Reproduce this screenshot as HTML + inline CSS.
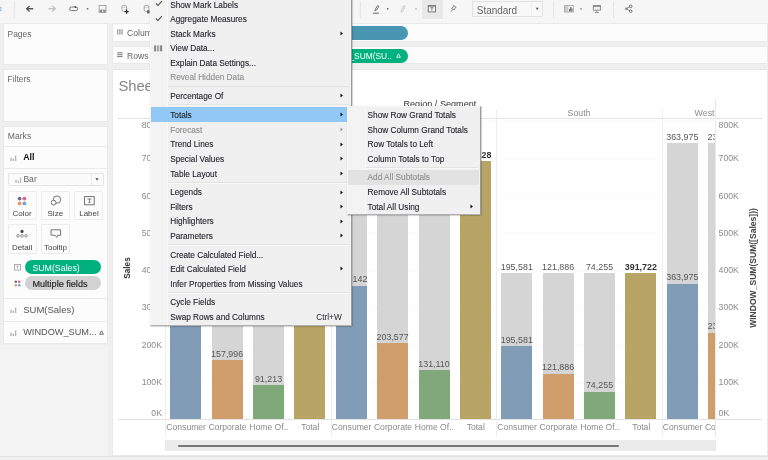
<!DOCTYPE html>
<html><head><meta charset="utf-8"><title>Tableau - Sheet 1</title>
<style>
html,body{margin:0;padding:0;}
body{width:768px;height:460px;overflow:hidden;position:relative;background:#ededed;font-family:"Liberation Sans",sans-serif;}
#wrap{position:absolute;left:-6px;top:-6px;width:780px;height:472px;background:#f2f2f2;filter:blur(0.4px);}
#app{position:absolute;left:6px;top:6px;width:768px;height:460px;overflow:hidden;}
#app div,#app svg{position:absolute;}
.t{white-space:nowrap;}
</style></head><body><div id="wrap"><div id="app">
<div style="left:0px;top:0px;width:768px;height:460px;background:#efefef;"></div>
<div style="left:0px;top:0px;width:768px;height:23.4px;background:#f6f6f6;"></div>
<div style="left:3.4px;top:23.2px;width:104.4px;height:41.4px;background:#fcfcfc;border:1px solid #e9e9e9;box-sizing:border-box;"></div>
<div style="left:3.4px;top:69px;width:104.4px;height:53px;background:#fcfcfc;border:1px solid #e9e9e9;box-sizing:border-box;"></div>
<div style="left:3.4px;top:126px;width:104.4px;height:217.6px;background:#fcfcfc;border:1px solid #e9e9e9;box-sizing:border-box;"></div>
<div style="left:0px;top:345px;width:112px;height:115px;background:#f3f3f3;"></div>
<div style="left:108px;top:24px;width:4px;height:436px;background:#f0f0f0;"></div>
<div style="left:112px;top:23.4px;width:656px;height:18.2px;background:#fcfcfc;border:1px solid #e9e9e9;box-sizing:border-box;"></div>
<div style="left:112px;top:46.2px;width:656px;height:18.2px;background:#fcfcfc;border:1px solid #e9e9e9;box-sizing:border-box;"></div>
<div style="left:112px;top:68.6px;width:656px;height:387px;background:#fff;border:1px solid #e9e9e9;box-sizing:border-box;"></div>
<div style="left:0px;top:455.6px;width:768px;height:5px;background:#f0f0f0;border-top:1px solid #e0e0e0;box-sizing:border-box;"></div>
<div style="left:422px;top:0px;width:20.6px;height:18.8px;background:#e8e8e8;"></div>
<div style="left:472px;top:1.4px;width:71.4px;height:16px;background:#f8f8f8;border:1px solid #e2e2e2;box-sizing:border-box;border-radius:1px;"></div>
<div style="left:531px;top:2.4px;width:1px;height:14px;background:#efefef;"></div>
<div class="t" style="left:476.8px;top:3.80px;height:14px;line-height:14px;font-size:10px;color:#666;font-weight:400;letter-spacing:-0.05px;">Standard</div>
<svg style="left:0;top:0" width="768" height="23" viewBox="0 0 768 23"><path d="M14.3 1.8V17.8" stroke="#e2e2e2" stroke-width="1"/><path d="M360.3 1.8V17.8" stroke="#e2e2e2" stroke-width="1"/><path d="M553.6 1.8V17.8" stroke="#e2e2e2" stroke-width="1"/><path d="M613.6 1.8V17.8" stroke="#e2e2e2" stroke-width="1"/><path d="M0 7.4h1.6M0 9h1.8M0 10.6h1.6" stroke="#8fb0d4" stroke-width="0.9"/><path d="M33.2 8.75H26.8M29.6 5.9L26.6 8.75l3 2.85" fill="none" stroke="#555" stroke-width="1.3"/><path d="M48.6 8.75H55M52.3 5.9l3 2.85-3 2.85" fill="none" stroke="#c2c2c2" stroke-width="1.3"/><rect x="69.7" y="7" width="8" height="3.6" rx="1.8" fill="none" stroke="#777" stroke-width="1"/><circle cx="75.4" cy="7.1" r="0.9" fill="#445"/><rect x="86.7" y="8" width="1.6" height="1.6" fill="#777"/><rect x="386.9" y="8" width="1.6" height="1.6" fill="#777"/><rect x="415.2" y="8" width="1.6" height="1.6" fill="#c4c4c4"/><rect x="580.2" y="8" width="1.6" height="1.6" fill="#999"/><rect x="99.1" y="5.5" width="6.9" height="6.9" fill="#f3f3f3" stroke="#a2a2a2" stroke-width="0.9"/><rect x="99.5" y="9.7" width="6.1" height="2.6" fill="#8c8c8c"/><rect x="102" y="10.6" width="1.4" height="1.4" fill="#e8e8e8"/><rect x="121.9" y="5.4" width="4.6" height="6" rx="1.5" fill="none" stroke="#a0a0a0" stroke-width="0.9"/><path d="M121.9 7.2h4.6" stroke="#b5b5b5" stroke-width="0.6"/><rect x="124.4" y="9.5" width="4.4" height="4.4" fill="#f6f6f6"/><path d="M126.6 9.6v4.2M124.5 11.7h4.2" stroke="#2a2a2a" stroke-width="1.3"/><rect x="144.2" y="5.4" width="4.6" height="6" rx="1.5" fill="none" stroke="#a0a0a0" stroke-width="0.9"/><path d="M144.2 7.2h4.6" stroke="#b5b5b5" stroke-width="0.6"/><rect x="147" y="10.3" width="2.6" height="3.1" fill="#666"/><path d="M375 11l0.4-1.9 2.3-3.6 1.2 0.8-2.3 3.6z" fill="none" stroke="#666" stroke-width="0.9"/><path d="M372.8 13.2h6" stroke="#666" stroke-width="1"/><path d="M401 10.8l2.2-4.6a1 1 0 0 1 1.8 0.9l-2.2 4.6a1 1 0 0 1-1.8-0.9z" fill="#e6e6e6" stroke="#cdcdcd" stroke-width="0.9"/><rect x="428.3" y="5.5" width="7.2" height="6.4" fill="#f4f4f4" stroke="#777" stroke-width="1"/><path d="M428.3 6h7.2" stroke="#777" stroke-width="1.2"/><path d="M430.4 7.7h3M431.9 7.7v2.9" stroke="#777" stroke-width="0.9"/><path d="M453.6 5.4l2.6 1.9-1 0.5-0.9 2.2-2.9-1.6 1.8-1.4z" fill="#e9e9e9" stroke="#777" stroke-width="0.8"/><path d="M452.6 9.4l-1.6 2.3" stroke="#777" stroke-width="0.9"/><path d="M535.7 7.8h3.1l-1.55 2.1z" fill="#555"/><rect x="564.4" y="5.6" width="9.2" height="6.4" fill="#d6d6d6" stroke="#a6a6a6" stroke-width="0.8"/><rect x="568.4" y="6.2" width="4.8" height="5.2" fill="#f2f2f2"/><path d="M569.6 11.4V9.2M570.8 11.4V7M572 11.4V8.4" stroke="#555" stroke-width="1"/><path d="M565.6 6.6v4.6M567 6.6v4.6" stroke="#bdbdbd" stroke-width="0.8"/><rect x="593.3" y="5.8" width="7.1" height="4.4" fill="#f0f0f0" stroke="#888" stroke-width="0.9"/><path d="M593 6h7.8" stroke="#777" stroke-width="1.3"/><path d="M596.85 10.4v1.8M595 12.5h3.8" stroke="#888" stroke-width="0.9"/><path d="M626.4 8.75l4.2-2.5M626.4 8.75l4.2 2.5" stroke="#777" stroke-width="0.9"/><circle cx="626.3" cy="8.75" r="1.3" fill="#8a8a8a"/><circle cx="630.7" cy="6.3" r="1.3" fill="#f6f6f6" stroke="#666" stroke-width="0.9"/><circle cx="630.7" cy="11.2" r="1.3" fill="#f6f6f6" stroke="#666" stroke-width="0.9"/></svg>
<div class="t" style="left:7.6px;top:27.80px;height:12px;line-height:12px;font-size:8.4px;color:#666;font-weight:400;">Pages</div>
<div class="t" style="left:7.6px;top:73.00px;height:12px;line-height:12px;font-size:8.4px;color:#666;font-weight:400;">Filters</div>
<div class="t" style="left:7.8px;top:130.20px;height:12px;line-height:12px;font-size:8.6px;color:#666;font-weight:400;">Marks</div>
<div style="left:4px;top:146px;width:103px;height:1px;background:#ebebeb;"></div>
<svg style="left:10px;top:154.5px" width="7" height="6" viewBox="0 0 7 6"><rect x="0.3" y="2.6" width="1.4" height="3.4" fill="#b5b5b5"/><rect x="2.6" y="3.6" width="1.4" height="2.4" fill="#b5b5b5"/><rect x="4.9" y="0.6" width="1.4" height="5.4" fill="#b5b5b5"/></svg>
<div class="t" style="left:23.2px;top:150.90px;height:13px;line-height:13px;font-size:8.9px;color:#111;font-weight:700;">All</div>
<div style="left:4px;top:168px;width:103px;height:1px;background:#ebebeb;"></div>
<div style="left:8px;top:172.5px;width:95.5px;height:13.5px;background:#fbfbfb;border:1px solid #e4e4e4;box-sizing:border-box;border-radius:1.5px;"></div>
<div style="left:90.5px;top:173.5px;width:1px;height:11.5px;background:#ececec;"></div>
<svg style="left:14.6px;top:176.6px" width="7" height="6" viewBox="0 0 7 6"><rect x="0.3" y="2.6" width="1.4" height="3.4" fill="#c0c0c0"/><rect x="2.6" y="3.6" width="1.4" height="2.4" fill="#c0c0c0"/><rect x="4.9" y="0.6" width="1.4" height="5.4" fill="#c0c0c0"/></svg>
<div class="t" style="left:23.4px;top:173.30px;height:12px;line-height:12px;font-size:8.6px;color:#666;font-weight:400;">Bar</div>
<svg style="left:95.2px;top:178.4px" width="4" height="3" viewBox="0 0 4 3"><path d="M0.4 0.3h3.2L2 2.4z" fill="#444"/></svg>
<div style="left:7.5px;top:190.5px;width:29.2px;height:29.4px;background:#fcfcfc;border:1px solid #ececec;box-sizing:border-box;border-radius:1px;"></div>
<div style="left:41px;top:190.5px;width:29.2px;height:29.4px;background:#fcfcfc;border:1px solid #ececec;box-sizing:border-box;border-radius:1px;"></div>
<div style="left:74.3px;top:190.5px;width:29.2px;height:29.4px;background:#fcfcfc;border:1px solid #ececec;box-sizing:border-box;border-radius:1px;"></div>
<div style="left:7.5px;top:224px;width:29.2px;height:29.6px;background:#fcfcfc;border:1px solid #ececec;box-sizing:border-box;border-radius:1px;"></div>
<div style="left:41px;top:224px;width:29.2px;height:29.6px;background:#fcfcfc;border:1px solid #ececec;box-sizing:border-box;border-radius:1px;"></div>
<svg style="left:17px;top:195.5px" width="10" height="10" viewBox="0 0 10 10"><circle cx="2.6" cy="2.6" r="1.9" fill="#6b6b8c"/><circle cx="7.4" cy="2.6" r="1.9" fill="#e8607a"/><circle cx="2.6" cy="7.4" r="1.9" fill="#e8956a"/><circle cx="7.4" cy="7.4" r="1.9" fill="#6fa3cf"/></svg>
<div class="t" style="left:-77.9px;width:200px;text-align:center;top:208.30px;height:12px;line-height:12px;font-size:8.0px;color:#444;font-weight:400;">Color</div>
<svg style="left:49.5px;top:195px" width="12" height="11" viewBox="0 0 12 11"><circle cx="7" cy="4.6" r="3.7" fill="none" stroke="#666" stroke-width="0.9"/><circle cx="3.6" cy="7.6" r="2.4" fill="#fcfcfc" stroke="#666" stroke-width="0.9"/></svg>
<div class="t" style="left:-44.7px;width:200px;text-align:center;top:208.30px;height:12px;line-height:12px;font-size:8.0px;color:#444;font-weight:400;">Size</div>
<svg style="left:83.5px;top:195.5px" width="11" height="10" viewBox="0 0 11 10"><rect x="0.6" y="0.6" width="9.6" height="8.2" fill="none" stroke="#666" stroke-width="0.9"/><path d="M3.4 3h4M5.4 3v3.6M4.4 6.6h2" stroke="#666" stroke-width="0.8"/></svg>
<div class="t" style="left:-11px;width:200px;text-align:center;top:208.30px;height:12px;line-height:12px;font-size:8.0px;color:#444;font-weight:400;">Label</div>
<svg style="left:16px;top:229px" width="12" height="10" viewBox="0 0 12 10"><circle cx="6" cy="2.4" r="1.6" fill="#444"/><circle cx="2" cy="6.8" r="1.3" fill="none" stroke="#777" stroke-width="0.8"/><circle cx="6" cy="6.8" r="1.3" fill="none" stroke="#777" stroke-width="0.8"/><circle cx="10" cy="6.8" r="1.3" fill="none" stroke="#777" stroke-width="0.8"/></svg>
<div class="t" style="left:-77.9px;width:200px;text-align:center;top:242.00px;height:12px;line-height:12px;font-size:8.0px;color:#444;font-weight:400;">Detail</div>
<svg style="left:49.5px;top:229px" width="12" height="10" viewBox="0 0 12 10"><path d="M1 0.8h9.6v5.4H7.6L6.8 8.4 5 6.2H1z" fill="none" stroke="#666" stroke-width="0.9"/></svg>
<div class="t" style="left:-44.5px;width:200px;text-align:center;top:242.00px;height:12px;line-height:12px;font-size:8.0px;color:#444;font-weight:400;">Tooltip</div>
<svg style="left:14px;top:263.5px" width="7" height="7" viewBox="0 0 7 7"><rect x="0.5" y="0.5" width="6" height="5.6" fill="none" stroke="#999" stroke-width="0.8"/><path d="M2.2 2.2h2.6M3.5 2.2v2.6" stroke="#999" stroke-width="0.7"/></svg>
<div style="left:25px;top:260.2px;width:76px;height:14.2px;background:#00b180;border-radius:7.1px;"></div>
<div class="t" style="left:32.4px;top:261.70px;height:13px;line-height:13px;font-size:8.8px;color:#fff;font-weight:400;">SUM(Sales)</div>
<svg style="left:14px;top:279.5px" width="7" height="7" viewBox="0 0 7 7"><circle cx="1.8" cy="1.8" r="1.3" fill="#6b6b8c"/><circle cx="5.2" cy="1.8" r="1.3" fill="#e8607a"/><circle cx="1.8" cy="5.2" r="1.3" fill="#e8956a"/><circle cx="5.2" cy="5.2" r="1.3" fill="#6fa3cf"/></svg>
<div style="left:25px;top:276.3px;width:76px;height:13.9px;background:#d2d2d2;border-radius:7px;"></div>
<div class="t" style="left:32.4px;top:277.70px;height:13px;line-height:13px;font-size:9.1px;color:#2a2a2a;font-weight:400;-webkit-text-stroke:0.2px #2a2a2a;">Multiple fields</div>
<div style="left:4px;top:298px;width:103px;height:1px;background:#ebebeb;"></div>
<svg style="left:10px;top:307px" width="7" height="6" viewBox="0 0 7 6"><rect x="0.3" y="2.6" width="1.4" height="3.4" fill="#b5b5b5"/><rect x="2.6" y="3.6" width="1.4" height="2.4" fill="#b5b5b5"/><rect x="4.9" y="0.6" width="1.4" height="5.4" fill="#b5b5b5"/></svg>
<div class="t" style="left:23.2px;top:302.90px;height:13px;line-height:13px;font-size:9.5px;color:#555;font-weight:400;">SUM(Sales)</div>
<div style="left:4px;top:321px;width:103px;height:1px;background:#ebebeb;"></div>
<svg style="left:10px;top:329.8px" width="7" height="6" viewBox="0 0 7 6"><rect x="0.3" y="2.6" width="1.4" height="3.4" fill="#b5b5b5"/><rect x="2.6" y="3.6" width="1.4" height="2.4" fill="#b5b5b5"/><rect x="4.9" y="0.6" width="1.4" height="5.4" fill="#b5b5b5"/></svg>
<div class="t" style="left:23.2px;top:326.40px;height:13px;line-height:13px;font-size:9.2px;color:#555;font-weight:400;">WINDOW_SUM...</div>
<svg style="left:99.2px;top:329.6px" width="5" height="5" viewBox="0 0 5 5"><path d="M2.5 0.8L4.4 4.3H0.6z" fill="none" stroke="#555" stroke-width="0.8"/></svg>
<svg style="left:116.6px;top:29.4px" width="6" height="6" viewBox="0 0 6 6"><path d="M0.8 0.2v5.4M2.9 0.2v5.4M5 0.2v5.4" stroke="#666" stroke-width="0.8"/></svg>
<div class="t" style="left:127px;top:27.00px;height:12px;line-height:12px;font-size:8.6px;color:#666;font-weight:400;">Columns</div>
<svg style="left:116.6px;top:52.2px" width="6" height="6" viewBox="0 0 6 6"><path d="M0.2 0.8h5.4M0.2 2.7h5.4M0.2 4.6h5.4" stroke="#777" stroke-width="1"/></svg>
<div class="t" style="left:127px;top:49.60px;height:12px;line-height:12px;font-size:8.6px;color:#666;font-weight:400;">Rows</div>
<div style="left:300px;top:25.8px;width:108px;height:14.2px;background:#4996b2;border-radius:7.1px;"></div>
<div style="left:300px;top:48.5px;width:108px;height:14.2px;background:#00b180;border-radius:7.1px;"></div>
<div class="t" style="left:349.4px;top:49.60px;height:12px;line-height:12px;font-size:8.4px;color:#fff;font-weight:400;transform:scaleY(1.12);transform-origin:50% 60%;">_SUM(SU..</div>
<svg style="left:396px;top:53px" width="5" height="5" viewBox="0 0 5 5"><path d="M2.5 0.8L4.4 4.3H0.6z" fill="none" stroke="#fff" stroke-width="0.8"/></svg>
<div class="t" style="left:118.6px;top:76.00px;height:20px;line-height:20px;font-size:14.8px;color:#858585;font-weight:400;letter-spacing:-0.1px;">Sheet 1</div>
<div class="t" style="left:403.5px;top:97.90px;height:13px;line-height:13px;font-size:9.1px;color:#333;font-weight:400;">Region / Segment</div>
<div style="left:165.4px;top:382.0px;width:549.6px;height:1px;border-top:1px dotted #f4f4f4;box-sizing:border-box;"></div>
<div style="left:165.4px;top:344.7px;width:549.6px;height:1px;border-top:1px dotted #f4f4f4;box-sizing:border-box;"></div>
<div style="left:165.4px;top:307.4px;width:549.6px;height:1px;border-top:1px dotted #f4f4f4;box-sizing:border-box;"></div>
<div style="left:165.4px;top:270.1px;width:549.6px;height:1px;border-top:1px dotted #f4f4f4;box-sizing:border-box;"></div>
<div style="left:165.4px;top:232.8px;width:549.6px;height:1px;border-top:1px dotted #f4f4f4;box-sizing:border-box;"></div>
<div style="left:165.4px;top:195.5px;width:549.6px;height:1px;border-top:1px dotted #f4f4f4;box-sizing:border-box;"></div>
<div style="left:165.4px;top:158.2px;width:549.6px;height:1px;border-top:1px dotted #f4f4f4;box-sizing:border-box;"></div>
<div style="left:165.4px;top:120.9px;width:549.6px;height:1px;border-top:1px dotted #f4f4f4;box-sizing:border-box;"></div>
<div style="left:118px;top:118px;width:644px;height:1px;background:#e2e2e2;"></div>
<div style="left:118px;top:419px;width:644px;height:1px;background:#e2e2e2;"></div>
<div style="left:165.4px;top:119px;width:1px;height:318px;border-left:1px solid #eeeeee;box-sizing:border-box;"></div>
<div style="left:330.9px;top:109px;width:1px;height:328px;border-left:1px solid #eeeeee;box-sizing:border-box;"></div>
<div style="left:496.4px;top:109px;width:1px;height:328px;border-left:1px solid #eeeeee;box-sizing:border-box;"></div>
<div style="left:661.9px;top:109px;width:1px;height:328px;border-left:1px solid #eeeeee;box-sizing:border-box;"></div>
<div style="left:715.0px;top:99px;width:1px;height:338px;border-left:1px solid #e9e9e9;box-sizing:border-box;"></div>
<div style="left:0;top:0;width:715.0px;height:460px;overflow:hidden;"><div style="left:170.3px;top:232.34px;width:31px;height:186.96px;background:#d5d5d5;"></div><div style="left:170.3px;top:325.29px;width:31px;height:94.01px;background:#819cb7;"></div><div class="t" style="left:85.8px;width:200px;text-align:center;top:220.24px;height:13px;line-height:13px;font-size:8.9px;color:#555;font-weight:400;">252,031</div><div class="t" style="left:85.8px;width:200px;text-align:center;top:312.59px;height:13px;line-height:13px;font-size:8.9px;color:#555;font-weight:400;">252,031</div><div style="left:211.65px;top:232.34px;width:31px;height:186.96px;background:#d5d5d5;"></div><div style="left:211.65px;top:360.37px;width:31px;height:58.93px;background:#d09e6d;"></div><div class="t" style="left:127.15px;width:200px;text-align:center;top:220.24px;height:13px;line-height:13px;font-size:8.9px;color:#555;font-weight:400;">157,996</div><div class="t" style="left:127.15px;width:200px;text-align:center;top:347.67px;height:13px;line-height:13px;font-size:8.9px;color:#555;font-weight:400;">157,996</div><div style="left:253.0px;top:232.34px;width:31px;height:186.96px;background:#d5d5d5;"></div><div style="left:253.0px;top:385.28px;width:31px;height:34.02px;background:#7fa979;"></div><div class="t" style="left:168.5px;width:200px;text-align:center;top:220.24px;height:13px;line-height:13px;font-size:8.9px;color:#555;font-weight:400;">91,213</div><div class="t" style="left:168.5px;width:200px;text-align:center;top:372.58px;height:13px;line-height:13px;font-size:8.9px;color:#555;font-weight:400;">91,213</div><div style="left:294.35px;top:232.34px;width:31px;height:186.96px;background:#b8a565;"></div><div class="t" style="left:209.85px;width:200px;text-align:center;top:220.24px;height:13px;line-height:13px;font-size:8.9px;color:#333;font-weight:700;">501,240</div><div class="t" style="left:86.18px;width:200px;text-align:center;top:421.00px;height:12px;line-height:12px;font-size:8.6px;color:#8a8a8a;font-weight:400;">Consumer</div><div class="t" style="left:127.53px;width:200px;text-align:center;top:421.00px;height:12px;line-height:12px;font-size:8.6px;color:#8a8a8a;font-weight:400;">Corporate</div><div class="t" style="left:168.88px;width:200px;text-align:center;top:421.00px;height:12px;line-height:12px;font-size:8.6px;color:#8a8a8a;font-weight:400;">Home Of..</div><div class="t" style="left:210.23px;width:200px;text-align:center;top:421.00px;height:12px;line-height:12px;font-size:8.6px;color:#8a8a8a;font-weight:400;">Total</div><div class="t" style="left:148.2px;width:200px;text-align:center;top:107.00px;height:13px;line-height:13px;font-size:8.8px;color:#8a8a8a;font-weight:400;">Central</div><div style="left:335.8px;top:161.25px;width:31px;height:258.05px;background:#d5d5d5;"></div><div style="left:335.8px;top:286.09px;width:31px;height:133.21px;background:#819cb7;"></div><div class="t" style="left:251.3px;width:200px;text-align:center;top:149.15px;height:13px;line-height:13px;font-size:8.9px;color:#555;font-weight:400;">357,142</div><div class="t" style="left:251.3px;width:200px;text-align:center;top:273.39px;height:13px;line-height:13px;font-size:8.9px;color:#555;font-weight:400;">357,142</div><div style="left:377.15px;top:161.25px;width:31px;height:258.05px;background:#d5d5d5;"></div><div style="left:377.15px;top:343.37px;width:31px;height:75.93px;background:#d09e6d;"></div><div class="t" style="left:292.65px;width:200px;text-align:center;top:149.15px;height:13px;line-height:13px;font-size:8.9px;color:#555;font-weight:400;">203,577</div><div class="t" style="left:292.65px;width:200px;text-align:center;top:330.67px;height:13px;line-height:13px;font-size:8.9px;color:#555;font-weight:400;">203,577</div><div style="left:418.5px;top:161.25px;width:31px;height:258.05px;background:#d5d5d5;"></div><div style="left:418.5px;top:370.4px;width:31px;height:48.9px;background:#7fa979;"></div><div class="t" style="left:334.0px;width:200px;text-align:center;top:149.15px;height:13px;line-height:13px;font-size:8.9px;color:#555;font-weight:400;">131,110</div><div class="t" style="left:334.0px;width:200px;text-align:center;top:357.70px;height:13px;line-height:13px;font-size:8.9px;color:#555;font-weight:400;">131,110</div><div style="left:459.85px;top:161.25px;width:31px;height:258.05px;background:#b8a565;"></div><div class="t" style="left:375.35px;width:200px;text-align:center;top:149.15px;height:13px;line-height:13px;font-size:8.9px;color:#333;font-weight:700;">691,828</div><div class="t" style="left:251.68px;width:200px;text-align:center;top:421.00px;height:12px;line-height:12px;font-size:8.6px;color:#8a8a8a;font-weight:400;">Consumer</div><div class="t" style="left:293.02px;width:200px;text-align:center;top:421.00px;height:12px;line-height:12px;font-size:8.6px;color:#8a8a8a;font-weight:400;">Corporate</div><div class="t" style="left:334.38px;width:200px;text-align:center;top:421.00px;height:12px;line-height:12px;font-size:8.6px;color:#8a8a8a;font-weight:400;">Home Of..</div><div class="t" style="left:375.73px;width:200px;text-align:center;top:421.00px;height:12px;line-height:12px;font-size:8.6px;color:#8a8a8a;font-weight:400;">Total</div><div class="t" style="left:313.6px;width:200px;text-align:center;top:107.00px;height:13px;line-height:13px;font-size:8.8px;color:#8a8a8a;font-weight:400;">East</div><div style="left:501.3px;top:273.19px;width:31px;height:146.11px;background:#d5d5d5;"></div><div style="left:501.3px;top:346.35px;width:31px;height:72.95px;background:#819cb7;"></div><div class="t" style="left:416.8px;width:200px;text-align:center;top:261.09px;height:13px;line-height:13px;font-size:8.9px;color:#555;font-weight:400;">195,581</div><div class="t" style="left:416.8px;width:200px;text-align:center;top:333.65px;height:13px;line-height:13px;font-size:8.9px;color:#555;font-weight:400;">195,581</div><div style="left:542.65px;top:273.19px;width:31px;height:146.11px;background:#d5d5d5;"></div><div style="left:542.65px;top:373.84px;width:31px;height:45.46px;background:#d09e6d;"></div><div class="t" style="left:458.15px;width:200px;text-align:center;top:261.09px;height:13px;line-height:13px;font-size:8.9px;color:#555;font-weight:400;">121,886</div><div class="t" style="left:458.15px;width:200px;text-align:center;top:361.14px;height:13px;line-height:13px;font-size:8.9px;color:#555;font-weight:400;">121,886</div><div style="left:584.0px;top:273.19px;width:31px;height:146.11px;background:#d5d5d5;"></div><div style="left:584.0px;top:391.6px;width:31px;height:27.7px;background:#7fa979;"></div><div class="t" style="left:499.5px;width:200px;text-align:center;top:261.09px;height:13px;line-height:13px;font-size:8.9px;color:#555;font-weight:400;">74,255</div><div class="t" style="left:499.5px;width:200px;text-align:center;top:378.90px;height:13px;line-height:13px;font-size:8.9px;color:#555;font-weight:400;">74,255</div><div style="left:625.35px;top:273.19px;width:31px;height:146.11px;background:#b8a565;"></div><div class="t" style="left:540.85px;width:200px;text-align:center;top:261.09px;height:13px;line-height:13px;font-size:8.9px;color:#333;font-weight:700;">391,722</div><div class="t" style="left:417.17px;width:200px;text-align:center;top:421.00px;height:12px;line-height:12px;font-size:8.6px;color:#8a8a8a;font-weight:400;">Consumer</div><div class="t" style="left:458.52px;width:200px;text-align:center;top:421.00px;height:12px;line-height:12px;font-size:8.6px;color:#8a8a8a;font-weight:400;">Corporate</div><div class="t" style="left:499.88px;width:200px;text-align:center;top:421.00px;height:12px;line-height:12px;font-size:8.6px;color:#8a8a8a;font-weight:400;">Home Of..</div><div class="t" style="left:541.23px;width:200px;text-align:center;top:421.00px;height:12px;line-height:12px;font-size:8.6px;color:#8a8a8a;font-weight:400;">Total</div><div class="t" style="left:479.1px;width:200px;text-align:center;top:107.00px;height:13px;line-height:13px;font-size:8.8px;color:#8a8a8a;font-weight:400;">South</div><div style="left:666.8px;top:143.35px;width:31px;height:275.95px;background:#d5d5d5;"></div><div style="left:666.8px;top:283.54px;width:31px;height:135.76px;background:#819cb7;"></div><div class="t" style="left:582.3px;width:200px;text-align:center;top:131.25px;height:13px;line-height:13px;font-size:8.9px;color:#555;font-weight:400;">363,975</div><div class="t" style="left:582.3px;width:200px;text-align:center;top:270.84px;height:13px;line-height:13px;font-size:8.9px;color:#555;font-weight:400;">363,975</div><div style="left:708.15px;top:143.35px;width:31px;height:275.95px;background:#d5d5d5;"></div><div style="left:708.15px;top:332.76px;width:31px;height:86.54px;background:#d09e6d;"></div><div class="t" style="left:623.65px;width:200px;text-align:center;top:131.25px;height:13px;line-height:13px;font-size:8.9px;color:#555;font-weight:400;">232,000</div><div class="t" style="left:623.65px;width:200px;text-align:center;top:320.06px;height:13px;line-height:13px;font-size:8.9px;color:#555;font-weight:400;">232,000</div><div style="left:749.5px;top:143.35px;width:31px;height:275.95px;background:#d5d5d5;"></div><div style="left:749.5px;top:367.08px;width:31px;height:52.22px;background:#7fa979;"></div><div class="t" style="left:665.0px;width:200px;text-align:center;top:131.25px;height:13px;line-height:13px;font-size:8.9px;color:#555;font-weight:400;">140,000</div><div class="t" style="left:665.0px;width:200px;text-align:center;top:354.38px;height:13px;line-height:13px;font-size:8.9px;color:#555;font-weight:400;">140,000</div><div style="left:790.85px;top:143.35px;width:31px;height:275.95px;background:#b8a565;"></div><div class="t" style="left:706.35px;width:200px;text-align:center;top:131.25px;height:13px;line-height:13px;font-size:8.9px;color:#333;font-weight:700;">739,814</div><div class="t" style="left:582.67px;width:200px;text-align:center;top:421.00px;height:12px;line-height:12px;font-size:8.6px;color:#8a8a8a;font-weight:400;">Consumer</div><div class="t" style="left:624.02px;width:200px;text-align:center;top:421.00px;height:12px;line-height:12px;font-size:8.6px;color:#8a8a8a;font-weight:400;">Corporate</div><div class="t" style="left:665.38px;width:200px;text-align:center;top:421.00px;height:12px;line-height:12px;font-size:8.6px;color:#8a8a8a;font-weight:400;">Home Of..</div><div class="t" style="left:706.73px;width:200px;text-align:center;top:421.00px;height:12px;line-height:12px;font-size:8.6px;color:#8a8a8a;font-weight:400;">Total</div><div class="t" style="left:694.6px;top:107.00px;height:13px;line-height:13px;font-size:8.8px;color:#8a8a8a;font-weight:400;">West</div></div>
<div class="t" style="right:606px;top:407.30px;height:12px;line-height:12px;font-size:8.7px;color:#8a8a8a;font-weight:400;">0K</div>
<div class="t" style="left:718.6px;top:407.30px;height:12px;line-height:12px;font-size:8.7px;color:#8a8a8a;font-weight:400;">0K</div>
<div class="t" style="right:606px;top:376.00px;height:12px;line-height:12px;font-size:8.7px;color:#8a8a8a;font-weight:400;">100K</div>
<div class="t" style="left:718.6px;top:376.00px;height:12px;line-height:12px;font-size:8.7px;color:#8a8a8a;font-weight:400;">100K</div>
<div class="t" style="right:606px;top:338.70px;height:12px;line-height:12px;font-size:8.7px;color:#8a8a8a;font-weight:400;">200K</div>
<div class="t" style="left:718.6px;top:338.70px;height:12px;line-height:12px;font-size:8.7px;color:#8a8a8a;font-weight:400;">200K</div>
<div class="t" style="right:606px;top:301.40px;height:12px;line-height:12px;font-size:8.7px;color:#8a8a8a;font-weight:400;">300K</div>
<div class="t" style="left:718.6px;top:301.40px;height:12px;line-height:12px;font-size:8.7px;color:#8a8a8a;font-weight:400;">300K</div>
<div class="t" style="right:606px;top:264.10px;height:12px;line-height:12px;font-size:8.7px;color:#8a8a8a;font-weight:400;">400K</div>
<div class="t" style="left:718.6px;top:264.10px;height:12px;line-height:12px;font-size:8.7px;color:#8a8a8a;font-weight:400;">400K</div>
<div class="t" style="right:606px;top:226.80px;height:12px;line-height:12px;font-size:8.7px;color:#8a8a8a;font-weight:400;">500K</div>
<div class="t" style="left:718.6px;top:226.80px;height:12px;line-height:12px;font-size:8.7px;color:#8a8a8a;font-weight:400;">500K</div>
<div class="t" style="right:606px;top:189.50px;height:12px;line-height:12px;font-size:8.7px;color:#8a8a8a;font-weight:400;">600K</div>
<div class="t" style="left:718.6px;top:189.50px;height:12px;line-height:12px;font-size:8.7px;color:#8a8a8a;font-weight:400;">600K</div>
<div class="t" style="right:606px;top:152.20px;height:12px;line-height:12px;font-size:8.7px;color:#8a8a8a;font-weight:400;">700K</div>
<div class="t" style="left:718.6px;top:152.20px;height:12px;line-height:12px;font-size:8.7px;color:#8a8a8a;font-weight:400;">700K</div>
<div class="t" style="right:606px;top:118.50px;height:12px;line-height:12px;font-size:8.7px;color:#8a8a8a;font-weight:400;">800K</div>
<div class="t" style="left:718.6px;top:118.50px;height:12px;line-height:12px;font-size:8.7px;color:#8a8a8a;font-weight:400;">800K</div>
<div class="t" style="left:77.8px;top:261.8px;width:100px;height:12px;line-height:12px;text-align:center;font-size:8.2px;font-weight:700;color:#333;transform:rotate(-90deg);">Sales</div>
<div class="t" style="left:653.2px;top:261.6px;width:200px;height:12px;line-height:12px;text-align:center;font-size:8.55px;font-weight:700;color:#444;transform:rotate(-90deg);">WINDOW_SUM(SUM([Sales]))</div>
<div style="left:165.4px;top:440.3px;width:551px;height:11px;background:#ebebeb;"></div>
<div style="left:177.5px;top:444.6px;width:441px;height:2.4px;background:#777;border-radius:1.2px;"></div>
<div style="left:150px;top:-3px;width:201.7px;height:329.3px;background:#f0f0f0;box-shadow:0 0 1.5px 0.5px rgba(0,0,0,0.22),0.5px 0.5px 1.5px rgba(0,0,0,0.3);border:1px solid #f6f6f6;border-right:1px solid #9a9a9a;border-bottom:1px solid #b0b0b0;box-sizing:border-box;"></div><div style="left:151px;top:-3px;width:16.6px;height:328.3px;background:#f3f3f3;border-right:1px solid #f8f8f8;box-sizing:border-box;"></div><div class="t" style="left:170.2px;top:-0.10px;height:12px;line-height:12px;font-size:8.25px;color:#1e1e26;font-weight:400;-webkit-text-stroke:0.1px #1e1e26;">Show Mark Labels</div><svg style="left:154.9px;top:0.4px" width="9" height="7" viewBox="0 0 9 7"><path d="M0.8 3.4L2.9 5.4 7 1.2" fill="none" stroke="#505050" stroke-width="1.05"/></svg><div class="t" style="left:170.2px;top:14.30px;height:12px;line-height:12px;font-size:8.25px;color:#1e1e26;font-weight:400;-webkit-text-stroke:0.1px #1e1e26;">Aggregate Measures</div><svg style="left:154.9px;top:14.8px" width="9" height="7" viewBox="0 0 9 7"><path d="M0.8 3.4L2.9 5.4 7 1.2" fill="none" stroke="#505050" stroke-width="1.05"/></svg><div class="t" style="left:170.2px;top:28.60px;height:12px;line-height:12px;font-size:8.25px;color:#1e1e26;font-weight:400;-webkit-text-stroke:0.1px #1e1e26;">Stack Marks</div><svg style="left:339.5px;top:30.8px" width="4" height="5" viewBox="0 0 4 5"><path d="M0.5 0.5L2.9 2.5 0.5 4.5z" fill="#111"/></svg><div class="t" style="left:170.2px;top:43.20px;height:12px;line-height:12px;font-size:8.25px;color:#1e1e26;font-weight:400;-webkit-text-stroke:0.1px #1e1e26;">View Data...</div><svg style="left:154.2px;top:44.8px" width="9" height="7" viewBox="0 0 9 7"><rect x="0" y="0.4" width="2.2" height="6" fill="#8a8a8a"/><rect x="3" y="0.4" width="2.2" height="6" fill="#a8a8a8"/><rect x="6" y="0.4" width="2.2" height="6" fill="#8a8a8a"/></svg><div class="t" style="left:170.2px;top:57.80px;height:12px;line-height:12px;font-size:8.25px;color:#1e1e26;font-weight:400;-webkit-text-stroke:0.1px #1e1e26;">Explain Data Settings...</div><div class="t" style="left:170.2px;top:72.40px;height:12px;line-height:12px;font-size:8.25px;color:#8e8e8e;font-weight:400;-webkit-text-stroke:0.1px #8e8e8e;">Reveal Hidden Data</div><div style="left:168.2px;top:85.7px;width:180.5px;height:1.6px;background:linear-gradient(#e3e3e3 0,#e3e3e3 55%,#f8f8f8 55%);"></div><div class="t" style="left:170.2px;top:90.70px;height:12px;line-height:12px;font-size:8.25px;color:#1e1e26;font-weight:400;-webkit-text-stroke:0.1px #1e1e26;">Percentage Of</div><svg style="left:339.5px;top:92.9px" width="4" height="5" viewBox="0 0 4 5"><path d="M0.5 0.5L2.9 2.5 0.5 4.5z" fill="#111"/></svg><div style="left:168.2px;top:104.4px;width:180.5px;height:1.6px;background:linear-gradient(#e3e3e3 0,#e3e3e3 55%,#f8f8f8 55%);"></div><div style="left:151px;top:107.2px;width:198.7px;height:14.8px;background:#91c8f6;"></div><div class="t" style="left:170.2px;top:109.70px;height:12px;line-height:12px;font-size:8.25px;color:#1e1e26;font-weight:400;-webkit-text-stroke:0.1px #1e1e26;">Totals</div><svg style="left:339.5px;top:111.9px" width="4" height="5" viewBox="0 0 4 5"><path d="M0.5 0.5L2.9 2.5 0.5 4.5z" fill="#111"/></svg><div class="t" style="left:170.2px;top:124.50px;height:12px;line-height:12px;font-size:8.25px;color:#8e8e8e;font-weight:400;-webkit-text-stroke:0.1px #8e8e8e;">Forecast</div><svg style="left:339.5px;top:126.7px" width="4" height="5" viewBox="0 0 4 5"><path d="M0.5 0.5L2.9 2.5 0.5 4.5z" fill="#9a9a9a"/></svg><div class="t" style="left:170.2px;top:139.30px;height:12px;line-height:12px;font-size:8.25px;color:#1e1e26;font-weight:400;-webkit-text-stroke:0.1px #1e1e26;">Trend Lines</div><svg style="left:339.5px;top:141.5px" width="4" height="5" viewBox="0 0 4 5"><path d="M0.5 0.5L2.9 2.5 0.5 4.5z" fill="#111"/></svg><div class="t" style="left:170.2px;top:154.00px;height:12px;line-height:12px;font-size:8.25px;color:#1e1e26;font-weight:400;-webkit-text-stroke:0.1px #1e1e26;">Special Values</div><svg style="left:339.5px;top:156.2px" width="4" height="5" viewBox="0 0 4 5"><path d="M0.5 0.5L2.9 2.5 0.5 4.5z" fill="#111"/></svg><div class="t" style="left:170.2px;top:168.60px;height:12px;line-height:12px;font-size:8.25px;color:#1e1e26;font-weight:400;-webkit-text-stroke:0.1px #1e1e26;">Table Layout</div><svg style="left:339.5px;top:170.8px" width="4" height="5" viewBox="0 0 4 5"><path d="M0.5 0.5L2.9 2.5 0.5 4.5z" fill="#111"/></svg><div style="left:168.2px;top:182.0px;width:180.5px;height:1.6px;background:linear-gradient(#e3e3e3 0,#e3e3e3 55%,#f8f8f8 55%);"></div><div class="t" style="left:170.2px;top:187.30px;height:12px;line-height:12px;font-size:8.25px;color:#1e1e26;font-weight:400;-webkit-text-stroke:0.1px #1e1e26;">Legends</div><svg style="left:339.5px;top:189.5px" width="4" height="5" viewBox="0 0 4 5"><path d="M0.5 0.5L2.9 2.5 0.5 4.5z" fill="#111"/></svg><div class="t" style="left:170.2px;top:201.90px;height:12px;line-height:12px;font-size:8.25px;color:#1e1e26;font-weight:400;-webkit-text-stroke:0.1px #1e1e26;">Filters</div><svg style="left:339.5px;top:204.1px" width="4" height="5" viewBox="0 0 4 5"><path d="M0.5 0.5L2.9 2.5 0.5 4.5z" fill="#111"/></svg><div class="t" style="left:170.2px;top:216.40px;height:12px;line-height:12px;font-size:8.25px;color:#1e1e26;font-weight:400;-webkit-text-stroke:0.1px #1e1e26;">Highlighters</div><svg style="left:339.5px;top:218.6px" width="4" height="5" viewBox="0 0 4 5"><path d="M0.5 0.5L2.9 2.5 0.5 4.5z" fill="#111"/></svg><div class="t" style="left:170.2px;top:230.80px;height:12px;line-height:12px;font-size:8.25px;color:#1e1e26;font-weight:400;-webkit-text-stroke:0.1px #1e1e26;">Parameters</div><svg style="left:339.5px;top:233.0px" width="4" height="5" viewBox="0 0 4 5"><path d="M0.5 0.5L2.9 2.5 0.5 4.5z" fill="#111"/></svg><div style="left:168.2px;top:244.0px;width:180.5px;height:1.6px;background:linear-gradient(#e3e3e3 0,#e3e3e3 55%,#f8f8f8 55%);"></div><div class="t" style="left:170.2px;top:249.50px;height:12px;line-height:12px;font-size:8.25px;color:#1e1e26;font-weight:400;-webkit-text-stroke:0.1px #1e1e26;">Create Calculated Field...</div><div class="t" style="left:170.2px;top:264.20px;height:12px;line-height:12px;font-size:8.25px;color:#1e1e26;font-weight:400;-webkit-text-stroke:0.1px #1e1e26;">Edit Calculated Field</div><svg style="left:339.5px;top:266.4px" width="4" height="5" viewBox="0 0 4 5"><path d="M0.5 0.5L2.9 2.5 0.5 4.5z" fill="#111"/></svg><div class="t" style="left:170.2px;top:278.80px;height:12px;line-height:12px;font-size:8.25px;color:#1e1e26;font-weight:400;-webkit-text-stroke:0.1px #1e1e26;">Infer Properties from Missing Values</div><div style="left:168.2px;top:292.0px;width:180.5px;height:1.6px;background:linear-gradient(#e3e3e3 0,#e3e3e3 55%,#f8f8f8 55%);"></div><div class="t" style="left:170.2px;top:297.40px;height:12px;line-height:12px;font-size:8.25px;color:#1e1e26;font-weight:400;-webkit-text-stroke:0.1px #1e1e26;">Cycle Fields</div><div class="t" style="left:170.2px;top:312.00px;height:12px;line-height:12px;font-size:8.25px;color:#1e1e26;font-weight:400;-webkit-text-stroke:0.1px #1e1e26;">Swap Rows and Columns</div><div class="t" style="right:426.3px;top:312.00px;height:12px;line-height:12px;font-size:8.25px;color:#1e1e26;font-weight:400;">Ctrl+W</div>
<div style="left:347px;top:105.6px;width:134px;height:109.7px;background:#f0f0f0;box-shadow:0 0 1.5px 0.5px rgba(0,0,0,0.22),0.5px 0.5px 1.5px rgba(0,0,0,0.3);border:1px solid #f6f6f6;border-right:1px solid #9a9a9a;border-bottom:1px solid #b0b0b0;box-sizing:border-box;"></div><div style="left:348px;top:105.6px;width:17.6px;height:108.7px;background:#f3f3f3;border-right:1px solid #f8f8f8;box-sizing:border-box;"></div><div class="t" style="left:367.6px;top:110.00px;height:12px;line-height:12px;font-size:8.25px;color:#1e1e26;font-weight:400;-webkit-text-stroke:0.1px #1e1e26;">Show Row Grand Totals</div><div class="t" style="left:367.6px;top:124.50px;height:12px;line-height:12px;font-size:8.25px;color:#1e1e26;font-weight:400;-webkit-text-stroke:0.1px #1e1e26;">Show Column Grand Totals</div><div class="t" style="left:367.6px;top:139.30px;height:12px;line-height:12px;font-size:8.25px;color:#1e1e26;font-weight:400;-webkit-text-stroke:0.1px #1e1e26;">Row Totals to Left</div><div class="t" style="left:367.6px;top:154.20px;height:12px;line-height:12px;font-size:8.25px;color:#1e1e26;font-weight:400;-webkit-text-stroke:0.1px #1e1e26;">Column Totals to Top</div><div style="left:365.6px;top:167.4px;width:112.4px;height:1.6px;background:linear-gradient(#e3e3e3 0,#e3e3e3 55%,#f8f8f8 55%);"></div><div style="left:348px;top:169.8px;width:131px;height:14.8px;background:#e2e2e2;"></div><div class="t" style="left:367.6px;top:172.30px;height:12px;line-height:12px;font-size:8.25px;color:#8e8e8e;font-weight:400;-webkit-text-stroke:0.1px #8e8e8e;">Add All Subtotals</div><div class="t" style="left:367.6px;top:187.00px;height:12px;line-height:12px;font-size:8.25px;color:#1e1e26;font-weight:400;-webkit-text-stroke:0.1px #1e1e26;">Remove All Subtotals</div><div class="t" style="left:367.6px;top:201.70px;height:12px;line-height:12px;font-size:8.25px;color:#1e1e26;font-weight:400;-webkit-text-stroke:0.1px #1e1e26;">Total All Using</div><svg style="left:469.5px;top:203.9px" width="4" height="5" viewBox="0 0 4 5"><path d="M0.5 0.5L2.9 2.5 0.5 4.5z" fill="#111"/></svg>
</div></div></body></html>
